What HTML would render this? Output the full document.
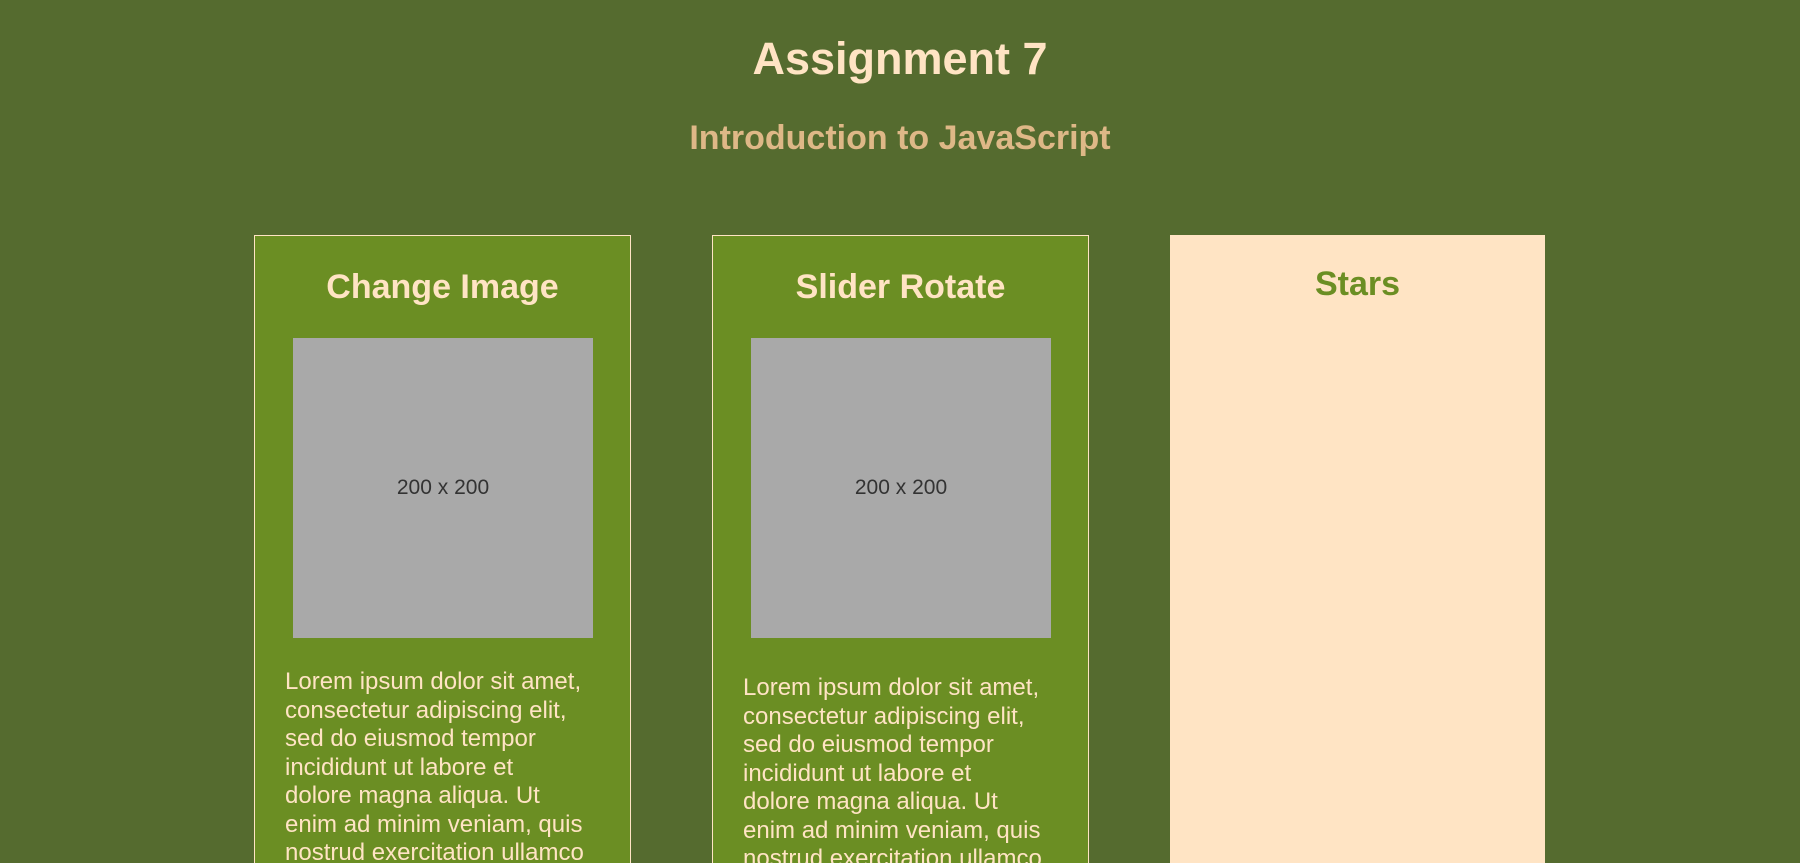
<!DOCTYPE html>
<html style="overflow:hidden;height:863px"><head><style>
body{margin:0;background:#556b2f;width:1800px;height:863px;overflow:hidden;position:relative;font-family:"Liberation Sans",sans-serif;}
h1{position:absolute;top:33px;left:0;width:1800px;text-align:center;margin:0;color:#ffe4c4;font-size:45px;font-weight:bold;}
h2{position:absolute;top:119px;left:0;width:1800px;text-align:center;margin:0;color:#deb887;font-size:34px;font-weight:bold;}
.card{position:absolute;top:235px;width:377px;height:628px;background:#6b8e23;border:1px solid #ffe4c4;border-bottom:none;box-sizing:border-box;}
.card h3{margin:0;position:absolute;top:32px;width:100%;text-align:center;color:#ffe4c4;font-size:34px;}
.img{position:absolute;left:38px;top:102px;width:300px;height:300px;background:#a9a9a9;color:#333;font-size:21px;display:flex;align-items:center;justify-content:center;}
.card p{position:absolute;left:30px;top:432px;width:300px;margin:0;color:#ffe4c4;font-size:24px;line-height:28.5px;}
</style></head><body>
<h1>Assignment 7</h1>
<h2>Introduction to JavaScript</h2>
<div class="card" style="left:254px"><h3>Change Image</h3><div class="img">200 x 200</div>
<p>Lorem ipsum dolor sit amet, consectetur adipiscing elit, sed do eiusmod tempor incididunt ut labore et dolore magna aliqua. Ut enim ad minim veniam, quis nostrud exercitation ullamco</p></div>
<div class="card" style="left:712px"><h3>Slider Rotate</h3><div class="img">200 x 200</div>
<p style="top:438px">Lorem ipsum dolor sit amet, consectetur adipiscing elit, sed do eiusmod tempor incididunt ut labore et dolore magna aliqua. Ut enim ad minim veniam, quis nostrud exercitation ullamco</p></div>
<div class="card" style="left:1170px;width:375px;background:#ffe4c4;border:none"><h3 style="color:#6b8e23;top:30px">Stars</h3></div>
</body></html>
